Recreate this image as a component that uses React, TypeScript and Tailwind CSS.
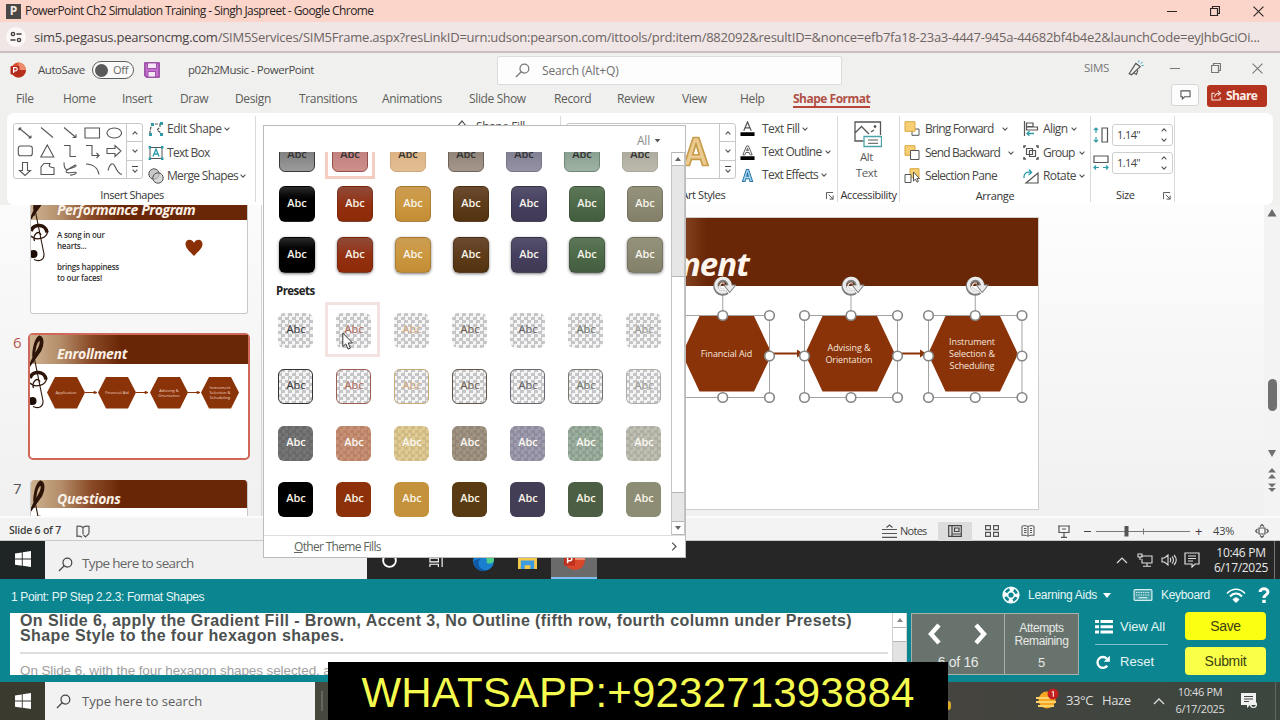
import React from "react";

const ui = "font-['Open_Sans','Noto_Sans',sans-serif]";
const arial = "font-['Liberation_Sans',Arial,sans-serif]";

function Chev({ className = "" }: { className?: string }) {
  return (
    <svg viewBox="0 0 6 4" className={"h-[4px] w-[6px] shrink-0 fill-none stroke-[#555] " + className}>
      <path d="M0.6 0.7 3 3.1 5.4 0.7" strokeWidth="1.1" />
    </svg>
  );
}

function MinIcon() {
  return <div className="h-px w-[10px] bg-current" />;
}
function RestoreIcon() {
  return (
    <svg viewBox="0 0 10 10" className="h-[10px] w-[10px] fill-none stroke-current">
      <path d="M0.5 2.5h7v7h-7zM2.5 2.5v-2h7v7h-2" strokeWidth="1.2" />
    </svg>
  );
}
function CloseIcon() {
  return (
    <svg viewBox="0 0 10 10" className="h-[11px] w-[11px] fill-none stroke-current">
      <path d="M0.5 0.5l9 9M9.5 0.5l-9 9" strokeWidth="1" />
    </svg>
  );
}
function SearchIcon({ className = "" }: { className?: string }) {
  return (
    <svg viewBox="0 0 16 16" className={"h-[15px] w-[15px] fill-none " + className}>
      <circle cx="10" cy="6" r="4.7" strokeWidth="1.3" />
      <path d="M6.6 9.4 1 15" strokeWidth="1.4" />
    </svg>
  );
}
function WindowsLogo() {
  return (
    <svg viewBox="0 0 16 16" className="h-[16px] w-[16px] fill-white">
      <path d="M0 2.4 6.8 1.4v6.2H0zM7.7 1.3 16 0v7.6H7.7zM0 8.5h6.8v6.2L0 13.7zM7.7 8.5H16V16l-8.3-1.2z" />
    </svg>
  );
}

function TitleBar() {
  return (
    <div className="flex h-[22px] items-center bg-[#fbd5ca] text-[#2b2524]">
      <div className="ml-[6px] flex h-[15px] w-[15px] items-center justify-center bg-[#4a4846] text-[12px] font-bold text-[#f5e8e4]">P</div>
      <div className="ml-[4px] w-[1130px] whitespace-nowrap text-[12px] tracking-[-0.59px]">PowerPoint Ch2 Simulation Training - Singh Jaspreet - Google Chrome</div>
      <div className="ml-[12px]"><MinIcon /></div>
      <div className="ml-[33px]"><RestoreIcon /></div>
      <div className="ml-[33px]"><CloseIcon /></div>
    </div>
  );
}

function UrlBar() {
  return (
    <div className="flex h-[31px] items-center border-b-2 border-[#cdbfbf] bg-[#f0e6e6]">
      <div className="ml-[6px] flex h-[20px] w-[20px] items-center justify-center rounded-full bg-[#fbf7f7]">
        <svg viewBox="0 0 12 12" className="h-[12px] w-[12px] fill-none stroke-[#403c3c]">
          <path d="M6.5 3h5M0.5 9h5" strokeWidth="1.5" />
          <circle cx="3" cy="3" r="1.6" strokeWidth="1.4" />
          <circle cx="9" cy="9" r="1.6" strokeWidth="1.4" />
        </svg>
      </div>
      <div className="ml-[8px] pt-[2px] whitespace-nowrap text-[13px] tracking-[-0.245px] text-[#6d6563]">
        <span className="text-[#4a4444]">sim5.pegasus.pearsoncmg.com</span>
        /SIM5Services/SIM5Frame.aspx?resLinkID=urn:udson:pearson.com/ittools/prd:item/882092&amp;resultID=&amp;nonce=efb7fa18-23a3-4447-945a-44682bf4b4e2&amp;launchCode=eyJhbGciOi...
      </div>
    </div>
  );
}

function AppTitle() {
  return (
    <div className="flex h-[34px] items-center text-[#4b4b4a]">
      <svg viewBox="0 0 16 16" className="ml-[10px] h-[16px] w-[16px]">
        <circle cx="8.5" cy="8" r="7.4" fill="#d6502f" />
        <path d="M8.5 0.6a7.4 7.4 0 0 1 7.4 7.4H8.5z" fill="#ee8b6d" />
        <path d="M1.1 8h14.8a7.4 7.4 0 0 1-14.8 0z" fill="#b8301c" />
        <rect x="0.5" y="4" width="9" height="8.6" rx="1" fill="#b5291b" />
        <path d="M3.6 11V5.6h2a1.6 1.6 0 0 1 0 3.3h-2" fill="none" stroke="#fff" strokeWidth="1.2" />
      </svg>
      <div className="ml-[12px] w-[54px] whitespace-nowrap text-[11.5px] tracking-[-0.45px]">AutoSave</div>
      <div className="flex h-[18px] w-[42px] items-center rounded-full border border-[#5e5e5e] bg-[#fafafa] pl-[2px]">
        <div className="h-[13px] w-[13px] rounded-full bg-[#5a5a5a]" />
        <div className="ml-[5px] pt-px text-[11px] tracking-[-0.2px] text-[#666]">Off</div>
      </div>
      <svg viewBox="0 0 16 16" className="ml-[10px] h-[16px] w-[16px]">
        <path d="M0.8 0.8h14.4v14.4H2.5L0.8 13.5z" fill="#c56fcf" stroke="#8f3f9b" strokeWidth="1.3" />
        <rect x="3.4" y="1" width="9" height="5.4" fill="#f6e6f8" stroke="#8f3f9b" strokeWidth="0.8" />
        <rect x="4" y="9.6" width="7.6" height="5.4" fill="#f6e6f8" stroke="#8f3f9b" strokeWidth="0.8" />
      </svg>
      <div className="ml-[28px] w-[309px] whitespace-nowrap text-[11.5px] tracking-[-0.46px]">p02h2Music - PowerPoint</div>
      <div className="flex h-[29px] w-[345px] items-center rounded-[2px] border border-[#dcdcdc] bg-[#fdfdfd]">
        <SearchIcon className="ml-[17px] stroke-[#777]" />
        <div className="ml-[12px] pt-px text-[12px] tracking-[-0.2px] text-[#6f6f6f]">Search (Alt+Q)</div>
      </div>
      <div className="mb-[4px] ml-[242px] w-[44px] text-[11.5px] tracking-[-0.3px] text-[#777]">SIMS</div>
      <svg viewBox="0 0 16 16" className="mb-[4px] h-[16px] w-[16px] fill-none stroke-[#555]">
        <path d="M1.2 13.8 7.8 3.4l4.4 3.2-8.6 8.2z" strokeWidth="1.2" />
        <path d="M5.8 13l2.6 1.4 1.5-4.2" strokeWidth="1.1" />
        <path d="M10.5 2.6 11 0.4M12.6 3.6l2-1.6M13.6 5.6l2-.2" stroke="#3aa0b8" strokeWidth="1" />
      </svg>
      <div className="mb-[4px] ml-[26px] flex items-center text-[#777]">
        <MinIcon />
        <div className="ml-[31px]"><RestoreIcon /></div>
        <div className="ml-[31px]"><CloseIcon /></div>
      </div>
    </div>
  );
}

const tabs: [string, string][] = [
  ["File", "w-[47px]"], ["Home", "w-[59px]"], ["Insert", "w-[58px]"], ["Draw", "w-[55px]"], ["Design", "w-[64px]"],
  ["Transitions", "w-[83px]"], ["Animations", "w-[87px]"], ["Slide Show", "w-[85px]"], ["Record", "w-[63px]"],
  ["Review", "w-[65px]"], ["View", "w-[58px]"], ["Help", "w-[53px]"],
];

function Tabs() {
  return (
    <div className="flex h-[26px] items-center pb-[2px] pl-[16px] text-[12px] tracking-[-0.35px] text-[#5c5d59]">
      {tabs.map(([t, w]) => (
        <div key={t} className={w + " shrink-0 whitespace-nowrap"}>{t}</div>
      ))}
      <div className="w-[77px] shrink-0 border-b-2 border-[#b8443a] pt-px leading-[15px] font-bold tracking-[-0.5px] whitespace-nowrap text-[#b05045]">Shape Format</div>
      <div className="mb-[8px] ml-[301px] flex h-[22px] w-[28px] shrink-0 items-center justify-center rounded-[3px] border border-[#d6d6d6] bg-[#fdfdfd]">
        <svg viewBox="0 0 12 11" className="h-[10px] w-[11px] fill-none stroke-[#555]">
          <path d="M1 1h10v6.5H5L2.6 9.8V7.5H1z" strokeWidth="1.2" />
        </svg>
      </div>
      <div className="mb-[7px] ml-[8px] flex h-[22px] w-[60px] shrink-0 items-center rounded-[3px] bg-[#b3331f] text-[12px] font-bold text-[#fbeee9]">
        <svg viewBox="0 0 12 12" className="ml-[4px] h-[11px] w-[11px] fill-none stroke-[#fbeee9]">
          <path d="M4 3.5H1v7.5h9V8M4 8c.2-3 1.8-4.4 5-4.4M7.4 1l3 2.6-3 2.6" strokeWidth="1.1" />
        </svg>
        <div className="ml-[4px] pt-px tracking-[-0.6px]">Share</div>
      </div>
    </div>
  );
}

function GalleryButtons() {
  return (
    <div className="flex w-[16px] flex-col border-l border-[#c8c8c8]">
      <div className="flex flex-1 items-center justify-center border-b border-[#c8c8c8]"><Chev className="rotate-180" /></div>
      <div className="flex flex-1 items-center justify-center border-b border-[#c8c8c8]"><Chev /></div>
      <div className="flex flex-1 flex-col items-center justify-center gap-[2px]"><div className="h-px w-[6px] bg-[#444]" /><Chev /></div>
    </div>
  );
}

const shapePaths = [
  "M1 3 13 13M1 3h2.500M1 3v2.500M13 13h-2.500M13 13V10.500", "M1 2.500 13 12.500", "M1 2.500 13 12.500M13 12.500H9.600M13 12.500V9.200", "M0 3h14.500v10H0z", "M7.200 3a7.200 5 0 1 0 .1 0z",
  "M2.500 3h9.500a2.300 2.300 0 0 1 2.300 2.300v5.200a2.300 2.300 0 0 1-2.300 2.300H2.500A2.300 2.300 0 0 1 .3 10.500V5.300A2.300 2.300 0 0 1 2.500 3z", "M7.300 2 13.800 14H.8z", "M1 2.500h6v11h6", "M1 2.500h6v10h7M11.500 10l2.600 2.500-2.600 2.500", "M0 5.500h8V2.500l6 5.500-6 5.500v-3H0z",
  "M4.500 1.500h5v8h3L7 14.500 1.500 9.500h3z", "M1 13.500V6l3-3.500h6c-2 3 0 4 4 4.200v6.800z", "M1 1.500c0 5 .5 7 3 7s8-6 9-4-10 3-10 6 9 0 10 1-3 3-6 2.500", "M1 3c7 0 12 4 13 10.500", "M1 9.500C3 2 6 1 8 5.500S11.500 13 15 13.500",
];

function InsertShapes() {
  return (
    <div className="flex h-[91px] w-[248px] shrink-0 flex-col">
      <div className="mt-[10px] flex h-[64px]">
        <div className="ml-[6px] flex h-[56px] w-[130px] overflow-hidden rounded-[3px] border border-[#c8c8c8]">
          <div className="grid w-[113px] grid-cols-5 grid-rows-3 place-items-center">
            {shapePaths.map((d, i) => (
              <svg key={i} viewBox="-1 0 17 16" className="h-[16px] w-[17px] fill-none stroke-[#565656]"><path d={d} strokeWidth="1.1" /></svg>
            ))}
          </div>
          <GalleryButtons />
        </div>
        <div className="-mt-[6px] ml-[5px] flex flex-col text-[12px] tracking-[-0.45px] whitespace-nowrap text-[#484846]">
          <div className="flex h-[24px] items-center">
            <svg viewBox="0 0 16 14" className="h-[14px] w-[16px] fill-none stroke-[#555]">
              <path d="M2 12C2 7 3 4 5 2h8M12 2v3l-3 3 4 3" strokeWidth="1.2" strokeDasharray="3 1.200" />
              <path d="M1 11h3v3H1zM3 1h3v3H3zM12 0h3v3h-3zM12 11h3v3h-3z" fill="#2b9ba8" stroke="none" />
            </svg>
            <span className="ml-[3px]">Edit Shape</span><Chev className="ml-[2px]" />
          </div>
          <div className="flex h-[24px] items-center">
            <svg viewBox="0 0 16 14" className="h-[14px] w-[16px] fill-none stroke-[#555]">
              <path d="M2 1.500h12v11H2z" strokeWidth="1" />
              <path d="M5 10.500 8 3l3 7.500M6 8h4" stroke="#2b9ba8" strokeWidth="1.300" />
              <path d="M.6 0h2.500v2.500H.6zM13 0h2.500v2.500H13zM.6 11.500h2.500V14H.6zM13 11.500h2.500V14H13z" fill="#2b9ba8" stroke="none" />
            </svg>
            <span className="ml-[3px] tracking-[-0.700px]">Text Box</span>
          </div>
          <div className="flex h-[22px] items-center">
            <svg viewBox="0 0 16 16" className="h-[16px] w-[16px] fill-[#c9c9c9] stroke-[#555]">
              <circle cx="6" cy="6" r="5.200" strokeWidth="1" />
              <circle cx="10" cy="10" r="5.200" strokeWidth="1" fillOpacity="0.700" />
            </svg>
            <span className="ml-[3px] tracking-[-0.680px]">Merge Shapes</span><Chev className="ml-[2px]" />
          </div>
        </div>
      </div>
      <div className="flex h-[17px] items-center justify-center pl-[2px] text-[11px] tracking-[-0.480px] text-[#333]">Insert Shapes</div>
    </div>
  );
}

function Launcher() {
  return (
    <svg viewBox="0 0 9 9" className="h-[8px] w-[8px] fill-none stroke-[#555]">
      <path d="M.5 8V.5H8M3 3l5 5M8 4v4H4" strokeWidth="1.100" />
    </svg>
  );
}

function Ribbon() {
  const label = "text-[11px] text-[#333] whitespace-nowrap";
  return (
    <div className="mx-[7px] flex h-[92px] overflow-hidden rounded-[7px] bg-white">
      <InsertShapes />
      <div className="my-[3px] w-px bg-[#d9d9d9]" />
      <div className="flex w-[304px] shrink-0 pt-[5px] pl-[199px] text-[12px] tracking-[-0.420px] text-[#484846]">
        <svg viewBox="0 0 14 14" className="mt-[2px] h-[14px] w-[14px] fill-none stroke-[#555]"><path d="M1 8 7 1l4 5-6 6z" strokeWidth="1.200" /></svg>
        <span className="ml-[7px]">Shape Fill</span>
      </div>
      <div className="my-[3px] w-px bg-[#d9d9d9]" />
      <div className="flex w-[276px] shrink-0 flex-col">
        <div className="flex h-[74px]">
          <div className="mt-[10px] ml-[5px] flex h-[56px] w-[170px] rounded-[3px] border border-[#c8c8c8]">
            <div className="flex flex-1 items-center justify-end pr-[9px]">
              <svg viewBox="0 0 30 34" className="h-[33px] w-[28px]">
                <path d="M2 32 12 2h6L28 32h-6l-2-6.500H10L8 32zM11.500 20.500h7L15 9z" fill="#eccb8e" stroke="#c79a4c" strokeWidth="1.800" />
              </svg>
            </div>
            <GalleryButtons />
          </div>
          <div className="mt-[4px] ml-[4px] flex flex-col text-[12px] tracking-[-0.550px] whitespace-nowrap text-[#484846]">
            <div className="flex h-[23px] items-center">
              <svg viewBox="0 0 15 16" className="h-[15px] w-[15px] fill-none stroke-[#555]"><path d="M3.500 10.500 7.500 1l4 9.500M5 7.300h5" strokeWidth="1.300" /><path d="M0 12h15v4H0z" fill="#000" stroke="none" /></svg>
              <span className="ml-[7px]">Text Fill</span><Chev className="ml-[3px]" />
            </div>
            <div className="flex h-[24px] items-center">
              <svg viewBox="0 0 15 16" className="h-[15px] w-[15px] fill-none stroke-[#555]"><path d="M2.500 10.500 6.500 1h2l4 9.500h-2.200l-1-2.500H5.700l-1 2.500zM6.500 6h2l-1-2.800z" strokeWidth="1" /><path d="M0 12h15v4H0z" fill="#000" stroke="none" /></svg>
              <span className="ml-[7px] tracking-[-0.720px]">Text Outline</span><Chev className="ml-[3px]" />
            </div>
            <div className="flex h-[22px] items-center">
              <svg viewBox="0 0 15 16" className="h-[15px] w-[15px]"><path d="M2 14.500 6.300 1.500h2.400L13 14.500h-2.800l-1-3H5.800l-1 3zM6.600 8.800h1.800L7.500 5.500z" fill="#a6d4ee" stroke="#2a78a8" strokeWidth="1.100" /></svg>
              <span className="ml-[7px] tracking-[-0.680px]">Text Effects</span><Chev className="ml-[3px]" />
            </div>
          </div>
        </div>
        <div className="flex h-[17px] items-center justify-between pr-[3px] pl-[94px]">
          <span className={label + " tracking-[-0.400px]"}>WordArt Styles</span><Launcher />
        </div>
      </div>
      <div className="my-[3px] w-px bg-[#d9d9d9]" />
      <div className="flex w-[61px] shrink-0 flex-col items-center">
        <div className="flex h-[74px] flex-col items-center pt-[8px] text-[11.500px] leading-[15.500px] tracking-[-0.400px] text-[#5a5a5a]">
          <svg viewBox="0 0 28 27" className="mb-[1px] -ml-[1px] h-[27px] w-[28px] fill-none stroke-[#555]">
            <path d="M9.500 20H1V1h25.500v13M1 12l6.500-6.500L15 13M17 11l3-2" strokeWidth="1.300" />
            <circle cx="21" cy="5.500" r="1" fill="#555" />
            <path d="M10 15.500h17.500v10H10z" fill="#fff" stroke="#4ea3a8" strokeWidth="1.300" />
            <path d="M14 19h10M14 22.300h10" strokeWidth="1" />
          </svg>
          <span className="-ml-[4px]">Alt</span><span className="-ml-[4px]">Text</span>
        </div>
        <div className={label + " flex h-[17px] items-center tracking-[-0.420px]"}>Accessibility</div>
      </div>
      <div className="my-[3px] w-px bg-[#d9d9d9]" />
      <div className="flex w-[190px] shrink-0 flex-col text-[12px] tracking-[-0.600px] whitespace-nowrap text-[#484846]">
        <div className="flex h-[75px] pt-[4px] pl-[4px]">
          <div className="flex w-[119px] flex-col tracking-[-0.830px]">
            <div className="flex h-[23px] items-center">
              <svg viewBox="0 0 16 15" className="h-[15px] w-[16px]"><path d="M8 8h7v6.300H8z" fill="#fff" stroke="#555" /><path d="M1 .7h10v9.600H1z" fill="#f6cf72" stroke="#d9a840" /></svg>
              <span className="ml-[5px] w-[74px]">Bring Forward</span><Chev className="ml-[3px]" />
            </div>
            <div className="flex h-[25px] items-center">
              <svg viewBox="0 0 16 15" className="h-[15px] w-[16px]"><path d="M1 .7h10v9.600H1z" fill="#f6cf72" stroke="#d9a840" /><path d="M6.500 5.500h8.500v9H6.500z" fill="#fff" stroke="#555" /></svg>
              <span className="ml-[5px] w-[80px]">Send Backward</span><Chev className="ml-[3px]" />
            </div>
            <div className="flex h-[21px] items-center">
              <svg viewBox="0 0 16 15" className="h-[15px] w-[16px]"><path d="M6 .7h9v9H6z" fill="#f6cf72" stroke="#d9a840" /><path d="M1 6.500h6v8H1z" fill="#fff" stroke="#555" /><path d="M9.500 4v9l2-1.800 1.500 3 1.400-.8-1.500-2.800h2.600z" fill="#fff" stroke="#444" strokeWidth=".9" /></svg>
              <span className="ml-[5px] tracking-[-0.700px]">Selection Pane</span>
            </div>
          </div>
          <div className="flex flex-col">
            <div className="flex h-[23px] items-center">
              <svg viewBox="0 0 16 15" className="h-[15px] w-[16px] fill-none stroke-[#555]"><path d="M1.500 0v15M3.500 2h6.500v3.500H3.500zM3.500 6h11v3H3.500z" strokeWidth="1.200" /><path d="M11 12.500H4M6.500 10.300 4 12.500l2.500 2.200" stroke="#2b9ba8" strokeWidth="1.300" /></svg>
              <span className="ml-[4px]">Align</span><Chev className="ml-[3px]" />
            </div>
            <div className="flex h-[25px] items-center">
              <svg viewBox="0 0 16 15" className="h-[15px] w-[16px] fill-none stroke-[#555]"><path d="M3.500 3.500h6v6h-6zM6.500 5.500h6v6h-6z" strokeWidth="1.200" /><path d="M1 3V1h2M13 1h2v2M1 12v2h2M13 14h2v-2" strokeWidth="1.600" /></svg>
              <span className="ml-[4px] tracking-[-0.800px]">Group</span><Chev className="ml-[4px]" />
            </div>
            <div className="flex h-[22px] items-center">
              <svg viewBox="0 0 16 15" className="h-[15px] w-[16px] fill-none stroke-[#555]"><path d="M3 14h12V4z" strokeWidth="1.200" /><path d="M1 9C.5 4.500 4 2 8 3.500M6 .5l2.600 3L5.500 6" stroke="#2b9ba8" strokeWidth="1.300" /></svg>
              <span className="ml-[4px]">Rotate</span><Chev className="ml-[3px]" />
            </div>
          </div>
        </div>
        <div className={label + " flex h-[17px] items-center justify-center tracking-[-0.350px]"}>Arrange</div>
      </div>
      <div className="my-[3px] w-px bg-[#d9d9d9]" />
      <div className="flex w-[83px] shrink-0 flex-col">
        <div className="flex h-[74px] flex-col gap-[6px] pt-[11px] pl-[2px]">
          {[0, 1].map((i) => (
            <div key={i} className="flex h-[22px] items-center">
              {i === 0 ? (
                <svg viewBox="0 0 16 16" className="h-[16px] w-[16px] fill-none stroke-[#555]"><path d="M9 1h5.500v14H9z" strokeWidth="1.200" /><path d="M3 1v5M3 10v5M1 3l2-2 2 2M1 13l2 2 2-2" stroke="#2b9ba8" strokeWidth="1.200" /></svg>
              ) : (
                <svg viewBox="0 0 16 16" className="h-[16px] w-[16px] fill-none stroke-[#555]"><path d="M1 1h14v6.500H1z" strokeWidth="1.200" /><path d="M1 12.500h5M10 12.500h5M3 10.500l-2 2 2 2M13 10.500l2 2-2 2" stroke="#2b9ba8" strokeWidth="1.200" /></svg>
              )}
              <div className="ml-[3px] flex h-[22px] w-[61px] items-center justify-between rounded-[3px] border border-[#cfcfcf] pr-[5px] pl-[4px] text-[11px] tracking-[-0.600px] text-[#444]">
                <span>1.14"</span>
                <span className="flex flex-col gap-[6px]"><Chev className="rotate-180" /><Chev /></span>
              </div>
            </div>
          ))}
        </div>
        <div className="flex h-[17px] items-center justify-between pr-[3px] pl-[25px]">
          <span className={label + " tracking-[-0.400px]"}>Size</span><Launcher />
        </div>
      </div>
      <div className="my-[3px] w-px bg-[#d9d9d9]" />
    </div>
  );
}

function Clef() {
  return (
    <svg viewBox="0 0 20 76" className="absolute top-0 left-0 h-[76px] w-[20px] fill-none stroke-[#2c1408]">
      <path d="M4.500 24 13 66c.5 6-5 8-10 5.500" strokeWidth="1.100" />
      <path d="M3.500 26C1.500 17 5 3 9.500 1c4.500 1 4 9 1.500 14S3 25 0 31C0 25 8.500 16 10 9.500c.8-3.500 0-4.500-1-4C6 7 4 17 4.800 23z" className="fill-[#2c1408]" strokeWidth="1.200" />
      <path d="M0 48c4.500 5 16 3 16.500-4.500M3.500 53C1 47 8 41 10 47" strokeWidth="1.300" />
      <path d="M0 43c3-8 15-7 16 1.500" strokeWidth="3.600" />
      <circle cx="2.500" cy="66" r="4" className="fill-[#1c0d06] stroke-none" />
    </svg>
  );
}

const headGrad = "bg-[linear-gradient(90deg,#cdb28f_0%,#b48c69_14%,#8a4a26_28%,#692606_42%,#6a2707_100%)]";

function Panel() {
  return (
    <div className={"w-[262px] shrink-0 overflow-hidden border-r border-[#d5d5d5] bg-[linear-gradient(#fbfbfb,#f0f0f0)] " + ui}>
      <div className="ml-[30px] h-[109px] w-[218px] overflow-hidden rounded-b-[3px] border border-t-0 border-[#c8c8c8] bg-white">
        <div className="relative h-full">
          <div className={"h-[15px] pl-[26px] text-[14px] leading-[10px] font-bold tracking-[-0.420px] whitespace-nowrap text-[#fbf1e6] italic " + headGrad}>Performance Program</div>
          <div className="flex">
            <div className="mt-[10px] ml-[26px] w-[128px] text-[8px] leading-[10.800px] font-semibold tracking-[-0.220px] text-[#333]">
              A song in our<br />hearts...<br /><br />brings happiness<br />to our faces!
            </div>
            <svg viewBox="0 0 18 17" className="mt-[19px] h-[17px] w-[18px] fill-[#8a2f06]"><path d="M9 17C5 12.500.5 9.500.5 5 .5 0 7-1 9 4c2-5 8.500-4 8.500 1 0 4.500-4.500 7.500-8.500 12z" /></svg>
          </div>
          <div className="absolute -top-[17px] left-0 h-[76px] w-[20px]"><Clef /></div>
        </div>
      </div>
      <div className="mt-[19px] flex">
        <div className="w-[28px] pl-[13px] text-[15px] leading-[19px] text-[#b5564a]">6</div>
        <div className="h-[127px] w-[222px] rounded-[5px] border-2 border-[#d0685a] bg-white">
          <div className="relative h-full overflow-hidden">
            <div className={"h-[29px] pl-[27px] text-[14px] leading-[38px] font-bold tracking-[-0.300px] text-[#fbf1e6] italic " + headGrad}>Enrollment</div>
            <div className="absolute top-0 left-0"><Clef /></div>
            <svg viewBox="0 0 218 60" className="h-[60px] w-[218px]">
              {[17, 68, 120, 171].map((x) => (
                <path key={x} transform={`translate(${x} 0)`} d="M0 28.500 8 13h22l8 15.500L30 44.500H8z" fill="#8a3208" />
              ))}
              {[55, 106, 158].map((x) => (
                <path key={x} transform={`translate(${x} 0)`} d="M0 28.500h11M9 27.500l3 1-3 1z" stroke="#8a3208" fill="#8a3208" strokeWidth="1" />
              ))}
              <g fill="#f0d8cc" textAnchor="middle" fontSize="4" fontFamily="Open Sans">
                <text x="36" y="30">Application</text>
                <text x="87" y="30">Financial Aid</text>
                <text x="139" y="27.500">Advising &amp;</text><text x="139" y="32.500">Orientation</text>
                <text x="190" y="25">Instrument</text><text x="190" y="30">Selection &amp;</text><text x="190" y="35">Scheduling</text>
              </g>
            </svg>
          </div>
        </div>
      </div>
      <div className="mt-[20px] flex">
        <div className="w-[30px] pl-[13px] text-[15px] leading-[16px] text-[#555]">7</div>
        <div className="relative h-[60px] w-[218px] overflow-hidden rounded-t-[4px] border-x border-[#c8c8c8] bg-white">
          <div className={"h-[28px] pl-[26px] text-[14px] leading-[38px] font-bold tracking-[-0.300px] text-[#fbf1e6] italic " + headGrad}>Questions</div>
          <Clef />
        </div>
      </div>
    </div>
  );
}

const hexes = [
  { l: 676, r: 769.5, hx: 682, text: ["Financial Aid"], tx: 726.5 },
  { l: 804.5, r: 897.5, hx: 805, text: ["Advising &", "Orientation"], tx: 849 },
  { l: 928.5, r: 1022, hx: 928, text: ["Instrument", "Selection &", "Scheduling"], tx: 972 },
];

function Stage() {
  return (
    <div className="relative flex-1 overflow-hidden bg-[linear-gradient(#fdfdfd,#f0f0f0)]">
      <div className="mt-[12px] ml-[257px] h-[293px] w-[520px] border border-[#cfcfcf] bg-white">
        <div className="flex h-[68px] w-full items-center bg-[linear-gradient(90deg,#cdb28f_0%,#b48c69_12%,#7c3a18_33%,#6a2707_36%)] pl-[54px]">
          <div className="w-[175px] pt-[23px] text-right text-[33px] leading-[40px] font-bold tracking-[-0.900px] whitespace-nowrap text-[#fdf6ee] italic">Enrollment</div>
        </div>
      </div>
      <svg viewBox="676 270 360 140" className="absolute top-[65px] left-[414px] h-[140px] w-[360px] overflow-visible font-['Open_Sans',sans-serif]">
        <path d="M774 353.500h25M902 353.500h22" stroke="#8a3208" strokeWidth="2" />
        <path d="M797 349.500l6 4-6 4zM920 349.500l6 4-6 4z" fill="#8a3208" />
        {hexes.map((h) => {
          const m = (h.l + h.r) / 2;
          return (
            <g key={h.l}>
              <path transform={`translate(${h.hx} 316)`} d="M0 38 17.500 0h54.500l18 38-18 37.500H17.500z" fill="#8a3208" />
              {h.text.map((t, i) => (
                <text key={t} x={h.tx} y={356.5 + (i - (h.text.length - 1) / 2) * 12} textAnchor="middle" fontSize="9" letterSpacing="-0.1" fill="#f6e6de">{t}</text>
              ))}
              <path d={`M${h.l} 315.500H${h.r}V397.500H${h.l}zM${m} 295V311`} fill="none" stroke="#a3a3a3" strokeWidth="1" />
              {[[h.l, 315.5], [m, 315.5], [h.r, 315.5], [h.l, 356], [h.r, 356], [h.l, 397.5], [m, 397.5], [h.r, 397.5]].map(([x, y]) => (
                <circle key={x + "-" + y} cx={x} cy={y} r="4.800" fill="#fff" stroke="#858585" strokeWidth="1.600" />
              ))}
              <g transform={`translate(${m} 286)`} fill="none">
                <path d="M4.400 5.800A7 7 0 1 1 7-.5" stroke="#808080" strokeWidth="5" />
                <path d="M1-1h12L7 6.500z" fill="#ebebeb" stroke="#808080" strokeWidth="1.100" strokeLinejoin="round" />
                <path d="M3.800 5.300A7 7 0 1 1 7 1" stroke="#ebebeb" strokeWidth="3" />
                <path d="M1.800 2.500A3 3 0 1 1 1.800-2.500" stroke="#dcdcdc" strokeWidth="1.400" />
              </g>
            </g>
          );
        })}
      </svg>
    </div>
  );
}

function StageScroll() {
  return (
    <div className="flex w-[16px] shrink-0 flex-col items-center bg-[#f3f3f3]">
      <svg viewBox="0 0 10 8" className="mt-[4px] h-[8px] w-[10px] fill-[#6a6a6a]"><path d="M5 0 9.500 7.500h-9z" /></svg>
      <div className="mt-[162px] h-[32px] w-[9px] rounded-full bg-[#707070]" />
      <svg viewBox="0 0 10 44" className="mt-[38px] h-[44px] w-[10px] fill-[#707070]">
        <path d="M1 1h8L5 8zM1 23.500 5 19l4 4.500zM1 29.500 5 25l4 4.500zM1 34.500h8L5 38.500zM1 39h8L5 43z" />
      </svg>
    </div>
  );
}

function StatusBar() {
  return (
    <div className="flex h-[25px] items-center border-t-2 border-b border-t-[#fbfbfb] border-b-[#c9c9c9] bg-[#f3f3f3] pt-[4px] text-[11px] tracking-[-0.400px] text-[#3f3f3f]">
      <div className="ml-[9px] w-[67px] text-[10.500px] font-semibold tracking-[-0.220px] whitespace-nowrap">Slide 6 of 7</div>
      <svg viewBox="0 0 14 13" className="h-[13px] w-[14px] fill-none stroke-[#555]"><path d="M7 2.500C5 1 3 1 1 1.300v10c2-.3 4 0 5 1M7 2.500C9 1 11 1 13 1.300v7M7 2.500v7M7.500 10l2 2 3.500-3.500" strokeWidth="1.200" /></svg>
      <svg viewBox="0 0 15 14" className="ml-[792px] h-[14px] w-[15px] fill-none stroke-[#555]"><path d="M0 5.500h15M0 9.500h15M0 13.300h15M4.500 3.500 7.500 1l3 2.500" strokeWidth="1.200" /></svg>
      <div className="ml-[3px] w-[38px] tracking-[-0.720px]">Notes</div>
      <div className="flex h-[19px] w-[34px] items-center justify-center bg-[#dcdcdc]">
        <svg viewBox="0 0 14 12" className="h-[12px] w-[14px] fill-none stroke-[#444]"><path d="M.7.700h12.600v10.600H.7zM4 .7v10.600M6.500 3h4.500v3.500H6.500zM4 9h9" strokeWidth="1.200" /></svg>
      </div>
      <svg viewBox="0 0 14 12" className="ml-[13px] h-[12px] w-[14px] fill-none stroke-[#555]"><path d="M.6.600h4.800v4H.6zM8.600.600h4.800v4H8.600zM.6 7.400h4.800v4H.6zM8.600 7.400h4.800v4H8.600z" strokeWidth="1.200" /></svg>
      <svg viewBox="0 0 14 12" className="ml-[22px] h-[12px] w-[14px] fill-none stroke-[#555]"><path d="M7 1.500C5 .5 3 .5 1 1v9.500c2-.5 4-.5 6 .8 2-1.300 4-1.300 6-.8V1c-2-.5-4-.5-6 .5zM7 1.500v9.500M3 3.500h2.500M3 5.500h2.500M3 7.500h2.500M9 3.500h2M9 5.500h2M9 7.500h2" strokeWidth="1" /></svg>
      <svg viewBox="0 0 12 13" className="ml-[23px] h-[13px] w-[12px] fill-none stroke-[#555]"><path d="M0 1h12M1 1v6.500h10V1M6 7.500v4.500M3 12.300h6M4 4h4" strokeWidth="1.200" /></svg>
      <div className="ml-[14px] h-px w-[7px] bg-[#444]" />
      <svg viewBox="0 0 94 12" className="ml-[5px] h-[12px] w-[94px]"><path d="M0 6.500h94M47.500 3.500v6" stroke="#777" /><path d="M28.500 1h4v10.500h-4z" fill="#555" /></svg>
      <div className="ml-[5px] text-[13px] leading-[12px]">+</div>
      <div className="ml-[11px] w-[42px] tracking-[-0.200px]">43%</div>
      <svg viewBox="0 0 14 14" className="h-[14px] w-[14px] fill-none stroke-[#555]"><path d="M4 4h6v6H4zM5 2.500 7 .6l2 1.900M5 11.500l2 1.900 2-1.900M2.500 5 .6 7l1.900 2M11.500 5l1.900 2-1.900 2" strokeWidth="1.200" /></svg>
    </div>
  );
}

function InnerTaskbar() {
  return (
    <div className="flex h-[38px] bg-[#262626] text-[#e8e8e8]">
      <div className="flex w-[45px] items-center justify-center bg-[#1f2424] pb-[2px]"><WindowsLogo /></div>
      <div className="flex w-[322px] items-center bg-[#f1f1f1] pt-[8px] text-[#666]">
        <SearchIcon className="ml-[13px] stroke-[#444]" />
        <div className="ml-[9px] pb-px text-[13.500px] tracking-[-0.660px]">Type here to search</div>
      </div>
      <div className="flex w-[230px] items-center">
        <svg viewBox="0 0 16 16" className="ml-[15px] h-[15px] w-[15px] fill-none stroke-white"><circle cx="8" cy="8" r="6.800" strokeWidth="2" /></svg>
        <svg viewBox="0 0 16 16" className="ml-[32px] h-[15px] w-[15px] fill-none stroke-white"><path d="M1 1v2h9V1M1 15v-3h9v3M1 5.500h9v4H1zM14 1v14" strokeWidth="1.200" /></svg>
        <svg viewBox="0 0 24 24" className="ml-[28px] h-[23px] w-[23px]">
          <circle cx="12" cy="12" r="11" fill="#1b7fd0" />
          <path d="M3 9C7 0 22 0 23 11c0 5-6 5-8 3 3-5-5-8-12-5z" fill="#4fd08a" />
          <path d="M9 10c-5 5-1 12 6 12-8 4-14-4-13-10z" fill="#0f5aa8" />
        </svg>
        <svg viewBox="0 0 22 20" className="ml-[22px] h-[19px] w-[21px]"><path d="M1 2h8l2 2h10v15H1z" fill="#f4c84a" /><path d="M4 10h14v9h-4v-4H8v4H4z" fill="#3d9be0" /></svg>
        <div className="ml-[13px] flex h-[38px] w-[46px] items-center justify-center border-b-2 border-[#86bdec] bg-[#6a6a6a] pt-[2px]">
          <svg viewBox="0 0 24 24" className="h-[22px] w-[24px]"><circle cx="13" cy="12" r="11" fill="#d9472b" /><path d="M13 1a11 11 0 0 1 11 11H13z" fill="#ee8b6d" /><path d="M1 6h12v12H1z" fill="#c02e1c" /><path d="M5 15.500V8.500h2.500a2 2 0 0 1 0 4.300H5" fill="none" stroke="#fff" strokeWidth="1.600" /></svg>
        </div>
      </div>
      <div className="flex flex-1 items-center justify-end">
        <svg viewBox="0 0 12 7" className="h-[7px] w-[12px] fill-none stroke-[#ddd]"><path d="M1 6 6 1l5 5" strokeWidth="1.200" /></svg>
        <svg viewBox="0 0 16 14" className="ml-[9px] h-[14px] w-[16px] fill-none stroke-[#ddd]"><path d="M4 3h11v7H5V6M10 10v3M6 13.300h8M1 1h4v3H1zM3 4v3" strokeWidth="1.100" /></svg>
        <svg viewBox="0 0 16 12" className="ml-[8px] h-[12px] w-[16px] fill-none stroke-[#ddd]"><path d="M1 4h2.500L7 1v10L3.500 8H1zM9 4c1 1 1 3 0 4M11 2.500c2 2 2 5 0 7M13 1c3 3 3 7 0 10" strokeWidth="1.100" /></svg>
        <svg viewBox="0 0 16 16" className="ml-[7px] h-[16px] w-[16px] fill-none stroke-[#ddd]"><path d="M1 1h14v11h-4l-3 3v-3H1zM4 4h8M4 6.500h8M4 9h5" strokeWidth="1.200" /></svg>
        <div className="ml-[13px] flex w-[56px] flex-col items-center text-[12px] leading-[15px] tracking-[-0.300px] whitespace-nowrap"><span>10:46 PM</span><span>6/17/2025</span></div>
        <div className="ml-[5px] h-[38px] w-px bg-[#777]" /><div className="w-[5px]" />
      </div>
    </div>
  );
}

const row1 = [
  "from-[#6f6f6f] to-[#9b9b9b] border-[#3a3a3a]", "from-[#b77a78] to-[#cf8f8b] border-[#93504a]", "from-[#d9ad7c] to-[#e3be93] border-[#d0a87c]", "from-[#84786e] to-[#a5978b] border-[#6e6158]",
  "from-[#76758a] to-[#9492a3] border-[#75748a]", "from-[#7b9283] to-[#9fb3a4] border-[#6d8776]", "from-[#a3a294] to-[#bbbaad] border-[#a7a699]",
];
const row2 = [
  "from-[#2b2b2b] via-black to-black", "from-[#8f4a38] via-[#94300f] to-[#8d2a08]", "from-[#cb9c52] via-[#cc983f] to-[#c28d35]", "from-[#6b4a30] via-[#5e3c1a] to-[#53330f]",
  "from-[#55516b] via-[#464060] to-[#403a55]", "from-[#5d7657] via-[#4d6a49] to-[#445c40]", "from-[#94927a] via-[#8d8a74] to-[#837f68]",
];
const tint = ["text-[#333]", "text-[#b0695c]", "text-[#d2ab80]", "text-[#6b5b4c]", "text-[#5f5d6a]", "text-[#6c756c]", "text-[#9d9d99]"];
const outline = ["border-[#333]", "border-[#9d6156]", "border-[#c3ab7a]", "border-[#60594a]", "border-[#6a6873]", "border-[#73786f]", "border-[#adada8]"];
const translucent = ["bg-[#4a4a4a]/75", "bg-[#b5663e]/70", "bg-[#d5b460]/65", "bg-[#7d6b52]/70", "bg-[#6f6c86]/65", "bg-[#6d8a70]/65", "bg-[#a2a18d]/65"];
const solid = ["bg-black", "bg-[#8c3109]", "bg-[#c4923c]", "bg-[#583b12]", "bg-[#443d56]", "bg-[#4c5f45]", "bg-[#8d8c75]"];
const check = "bg-[repeating-conic-gradient(#c6c6c8_0_25%,#f5f5f5_0_50%)] bg-[length:7px_7px]";

function Gallery() {
  return (
    <div className={"absolute top-[125px] left-[263px] flex h-[433px] w-[423px] flex-col border border-[#bcbcbc] bg-white " + ui}>
      <div className="flex h-[26px] items-center justify-end gap-[4px] pt-[3px] pr-[24px] text-[12px] tracking-[-0.200px] text-[#8a8a8a]">
        All<svg viewBox="0 0 7 5" className="h-[4px] w-[7px] fill-[#555]"><path d="M0 0h7L3.500 4.500z" /></svg>
      </div>
      <div className="flex h-[383px]">
        <div className="flex w-[407px] shrink-0 flex-col overflow-hidden">
          <div className="flex h-[27px] shrink-0 pl-[15px]">
            {row1.map((c, i) => (
              <div key={i} className={i === 1 ? "-mt-[17px] -ml-[7px] h-[44px] w-[50px] shrink-0 border-[3px] border-[#f3cdc0] pt-[1px] pl-[4px]" : i === 0 ? "-mt-[13px] w-[53px] shrink-0" : i === 2 ? "-mt-[13px] ml-[15px] w-[58px] shrink-0" : "-mt-[13px] w-[58px] shrink-0"}>
                <div className={"flex h-[33px] w-[36px] items-center justify-center rounded-[6px] border bg-linear-to-b pb-[3px] text-[11px] font-semibold text-[#333] " + c}>Abc</div>
              </div>
            ))}
          </div>
          {[0, 1].map((r) => (
            <div key={r} className={"flex h-[36px] gap-[22px] pl-[15px] " + (r === 0 ? "mt-[7px]" : "mt-[15px]")}>
              {row2.map((c, i) => (
                <div key={i} className={"flex h-[36px] w-[36px] shrink-0 items-center justify-center rounded-[6px] border border-black/15 bg-linear-to-b pb-[1px] text-[11px] font-semibold text-[#f7f3ea] " + c + (r === 1 ? " shadow-[0_1px_3px_rgba(0,0,0,0.5)]" : "")}>Abc</div>
              ))}
            </div>
          ))}
          <div className="mt-[9px] h-[16px] pl-[12px] text-[11.500px] leading-[17px] font-bold tracking-[-0.550px] text-[#222]">Presets</div>
          {[0, 1, 2, 3].map((r) => (
            <div key={r} className={"flex h-[36px] shrink-0 gap-[23px] pl-[14px] " + (r === 0 ? "mt-[15px]" : r === 1 ? "mt-[20px]" : r === 2 ? "mt-[21px]" : "mt-[20px]")}>
              {solid.map((s, i) => (
                <div key={i} className={"relative h-[35px] w-[35px] shrink-0 rounded-[6px] " + (r < 3 ? check : "")}>
                  {r === 0 && i === 1 && <div className="absolute -top-[11px] -left-[11px] h-[55px] w-[55px] border-[3px] border-[#f2e3e0]" />}
                  <div className={"flex h-full w-full items-center justify-center rounded-[6px] pb-[3px] pl-px text-[11px] " + (r < 2 ? "font-medium " : "font-semibold ") + (r === 0 ? tint[i] : r === 1 ? "border-[1.500px] " + outline[i] + " " + tint[i] : r === 2 ? translucent[i] + " text-[#fbf8f2]" : s + " text-[#fbf4e6]")}>Abc</div>
                </div>
              ))}
            </div>
          ))}
        </div>
        <div className="flex w-[14px] flex-col border-x border-[#c4c4c4] bg-[#e6e6e6]">
          <div className="flex h-[14px] items-center justify-center border-y border-[#b5b5b5] bg-white"><svg viewBox="0 0 6 4" className="h-[4px] w-[6px] fill-[#666]"><path d="M0 4h6L3 0z" /></svg></div>
          <div className="mt-[110px] h-[217px] border-y border-[#b5b5b5] bg-white" />
          <div className="mt-auto flex h-[14px] items-center justify-center border-y border-[#b5b5b5] bg-white"><svg viewBox="0 0 6 4" className="h-[4px] w-[6px] fill-[#666]"><path d="M0 0h6L3 4z" /></svg></div>
        </div>
      </div>
      <div className="flex flex-1 items-center justify-between border-t border-[#dedede] pr-[8px] pl-[30px] text-[12px] tracking-[-0.680px] text-[#5c665c]">
        <span><span className="underline">O</span>ther Theme Fills</span>
        <svg viewBox="0 0 6 10" className="h-[9px] w-[6px] fill-none stroke-[#555]"><path d="M1 .7 5.200 5 1 9.300" strokeWidth="1.400" /></svg>
      </div>
      <svg viewBox="0 0 12 18" className="absolute top-[206px] left-[78px] h-[18px] w-[12px]"><path d="M.8 1v13.500l3-2.600 2.300 5.200 2.300-1L6.200 11h4.300z" fill="#fff" stroke="#333" strokeWidth="1" /></svg>
    </div>
  );
}

function Instructions() {
  return (
    <div className={"h-[103px] bg-[#0b8590] text-[#e4f6f6] " + arial}>
      <div className="flex h-[34px] items-center pb-[2px] text-[12px]">
        <div className="ml-[11px] w-[991px] pt-[4px] tracking-[-0.360px] whitespace-nowrap">1 Point: PP Step 2.2.3: Format Shapes</div>
        <svg viewBox="0 0 18 18" className="h-[18px] w-[18px] fill-none stroke-white"><circle cx="9" cy="9" r="7.800" strokeWidth="1.600" /><circle cx="9" cy="9" r="3.400" strokeWidth="1.600" /><circle cx="9" cy="9" r="5.600" strokeWidth="3.200" strokeDasharray="4.400 4.400" strokeDashoffset="2.200" /></svg>
        <div className="ml-[8px] w-[75px] tracking-[-0.280px] whitespace-nowrap">Learning Aids</div>
        <svg viewBox="0 0 8 5" className="h-[5px] w-[8px] fill-white"><path d="M0 0h8L4 5z" /></svg>
        <svg viewBox="0 0 19 12" className="ml-[22px] h-[12px] w-[20px]"><rect x=".6" y=".6" width="17.800" height="10.800" rx="1" fill="#3f9da5" stroke="#d5eeee" strokeWidth="1.200" /><path d="M2.500 3.500h14M2.500 6h14" stroke="#d5eeee" strokeWidth="1.200" strokeDasharray="1.400 .9" /><path d="M5 8.700h9" stroke="#d5eeee" strokeWidth="1.200" /></svg>
        <div className="ml-[8px] w-[65px] tracking-[-0.330px]">Keyboard</div>
        <svg viewBox="0 0 20 15" className="h-[15px] w-[20px] fill-none stroke-white"><path d="M1 5.500C6-.200 14-.200 19 5.500" strokeWidth="1.500" /><path d="M4 8.500c3.500-4 8.500-4 12 0" strokeWidth="2" /><path d="M7 11.500c2-2.200 4-2.200 6 0L10 14.500z" strokeWidth="1" fill="#fff" /></svg>
        <svg viewBox="0 0 12 16" className="ml-[12px] h-[16px] w-[12px] fill-none stroke-white"><path d="M2 5C2 .8 10 .8 10 5c0 3-4 2.500-4 6" strokeWidth="3" /><path d="M4.300 12.800h3.400V16H4.300z" className="fill-white stroke-none" /></svg>
      </div>
      <div className="flex h-[62px]">
        <div className="ml-[10px] flex w-[897px] bg-white">
          <div className="flex w-[882px] flex-col overflow-hidden pl-[10px]">
            <div className="h-[30px] shrink-0 text-[16px] leading-[15px] font-bold tracking-[0.405px] whitespace-nowrap text-[#4c5150]">
              On Slide 6, apply the Gradient Fill - Brown, Accent 3, No Outline (fifth row, fourth column under Presets)<br />Shape Style to the four hexagon shapes.
            </div>
            <div className="mt-[9px] mr-[4px] h-[2px] shrink-0 bg-[#dedede]" />
            <div className="mt-[8px] shrink-0 text-[13.500px] leading-[18px] tracking-[-0.100px] whitespace-nowrap text-[#a0a0a0]">On Slide 6, with the four hexagon shapes selected, apply</div>
          </div>
          <div className="flex w-[15px] flex-col border-x border-[#d0d0d0] bg-[#e2e2e2]">
            <div className="flex h-[14px] items-center justify-center bg-white"><svg viewBox="0 0 6 4" className="h-[4px] w-[6px] fill-[#888]"><path d="M0 4h6L3 0z" /></svg></div>
            <div className="h-[15px] border-y border-[#b5b5b5] bg-white" />
          </div>
        </div>
        <div className="ml-[4px] flex h-[62px] w-[168px] border border-[#a9b0ab] bg-[#69736d] text-[#e6e9e6]">
          <div className="flex w-[93px] shrink-0 flex-col items-center border-r border-[#a9b0ab]">
            <svg viewBox="0 0 64 22" className="mt-[9px] h-[22px] w-[64px] fill-none stroke-white"><path d="M13 2 5 11l8 9M50 2l8 9-8 9" strokeWidth="4.400" /></svg>
            <div className="mt-[9px] text-[14px] leading-[16px] tracking-[-0.300px]">6 of 16</div>
          </div>
          <div className="flex flex-1 flex-col items-center pt-[8px] text-[12px] leading-[12.500px] tracking-[-0.380px]"><span>Attempts</span><span>Remaining</span><span className="mt-[8px] text-[13px] leading-[16px]">5</span></div>
        </div>
        <div className="ml-[16px] flex w-[73px] flex-col">
          <div className="flex h-[32px] shrink-0 items-center border-b border-[#7fc0c4] pb-[3px] whitespace-nowrap">
            <svg viewBox="0 0 18 14" className="h-[14px] w-[18px] fill-white"><path d="M0 0h4v3H0zM5.500 0H18v3H5.500zM0 5.300h4v3H0zM5.500 5.300H18v3H5.500zM0 10.600h4v3H0zM5.500 10.600H18v3H5.500z" /></svg>
            <span className="ml-[7px] text-[13px] tracking-[-0.030px]">View All</span>
          </div>
          <div className="flex h-[34px] shrink-0 items-center">
            <svg viewBox="0 0 16 16" className="h-[15px] w-[16px] fill-none stroke-white"><path d="M12.500 11.500A5.800 5.800 0 1 1 12 3.800" strokeWidth="2.500" /><path d="M15.300.700v6.500H8.800z" className="fill-white stroke-none" /></svg>
            <span className="ml-[9px] text-[13px] tracking-[0.050px]">Reset</span>
          </div>
        </div>
        <div className="-mt-[1px] ml-[17px] flex flex-col gap-[7px] text-[14px] tracking-[-0.300px] text-[#3b3f10]">
          <div className="flex h-[28px] w-[81px] items-center justify-center rounded-[4px] bg-[#fbff12]">Save</div>
          <div className="flex h-[28px] w-[81px] items-center justify-center rounded-[4px] bg-[#faff48]">Submit</div>
        </div>
      </div>
    </div>
  );
}

function OuterTaskbar() {
  return (
    <div className="flex h-[38px] bg-[#3b3f3c] text-[#dedede]">
      <div className="flex w-[45px] items-center justify-center bg-[#3a3a2e]"><WindowsLogo /></div>
      <div className="flex w-[270px] items-center bg-[#f2f2f2] text-[#5c5c5c]">
        <SearchIcon className="ml-[11px] stroke-[#444]" />
        <div className="ml-[11px] pt-px text-[13px] tracking-[0.030px]">Type here to search</div>
      </div>
      <div className="flex w-[633px] bg-[#47483d]"><div className="my-[9px] ml-[6px] w-[2px] bg-[#65665c]" /></div>
      <div className="flex flex-1 items-center bg-linear-to-r from-[#46443f] to-[#3b463f]">
        <div className="mt-[8px] mr-[85px] h-[9px] w-[3px] rounded-r-full bg-[#d9a92c]" />
        <svg viewBox="0 0 24 22" className="-mt-[4px] h-[22px] w-[24px]">
          <circle cx="11" cy="12" r="8.500" fill="#f5a623" />
          <path d="M0 10h20M0 14h20M2 18h16" stroke="#fbd36b" strokeWidth="2" />
          <circle cx="17" cy="6" r="5.500" fill="#c2201f" />
          <path d="M15.800 4.300 17.300 3.300v5.500" fill="none" stroke="#fff" strokeWidth="1" />
        </svg>
        <div className="ml-[6px] w-[36px] text-[13px] tracking-[-0.400px]">33°C</div>
        <div className="w-[51px] text-[13px] tracking-[-0.350px]">Haze</div>
        <svg viewBox="0 0 12 7" className="h-[7px] w-[12px] fill-none stroke-[#ddd]"><path d="M1 6 6 1l5 5" strokeWidth="1.300" /></svg>
        <div className="mb-[2px] ml-[9px] flex w-[52px] flex-col items-center text-[11px] leading-[17px] tracking-[-0.350px] whitespace-nowrap"><span>10:46 PM</span><span>6/17/2025</span></div>
        <svg viewBox="0 0 16 16" className="ml-[15px] h-[16px] w-[16px]"><path d="M0 0h15v12H9l-3 3v-3H0z" fill="#f0f0f0" /><path d="M3 3.500h9M3 6h9M3 8.500h5" stroke="#444" /><circle cx="12.500" cy="11.500" r="3" fill="none" stroke="#f0f0f0" strokeWidth="1.200" /></svg>
        <div className="ml-[18px] h-[38px] w-px bg-[#5f6763]" />
      </div>
    </div>
  );
}

export default function App() {
  return (
    <div className={"relative flex h-[720px] w-[1280px] flex-col overflow-hidden bg-[#f0f0ef] " + ui}>
      <TitleBar />
      <UrlBar />
      <AppTitle />
      <Tabs />
      <Ribbon />
      <div className="flex h-[311px] overflow-hidden">
        <Panel />
        <Stage />
        <StageScroll />
      </div>
      <StatusBar />
      <InnerTaskbar />
      <Instructions />
      <OuterTaskbar />
      <Gallery />
      <div className={"absolute top-[662px] left-[328px] flex h-[58px] w-[620px] items-center justify-center overflow-hidden bg-black pt-[3px] text-[42px] tracking-[0.180px] whitespace-nowrap text-[#f5fb4e] " + arial}>
        WHATSAPP:+923271393884
      </div>
    </div>
  );
}
